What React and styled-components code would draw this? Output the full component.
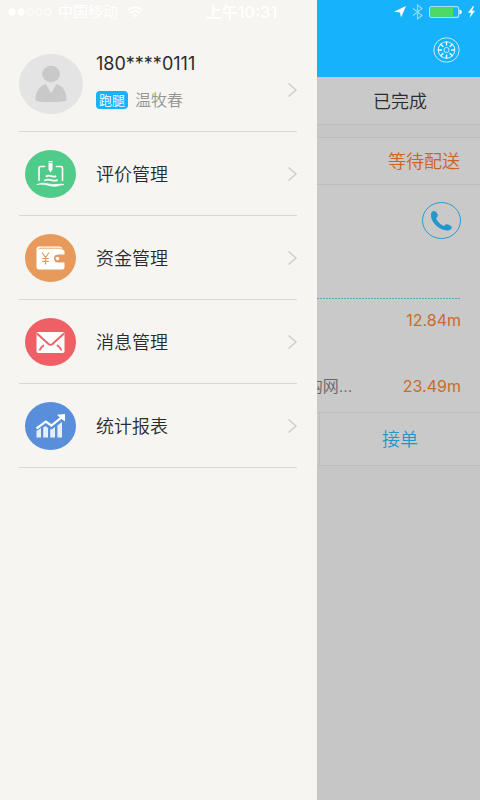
import React from 'react'
import styled, { createGlobalStyle } from 'styled-components'

const GlobalStyle = createGlobalStyle`
    * {
        box-sizing: border-box;
    }
    body {
        margin: 0;
        font-family: Inter, 'Noto Sans CJK SC', sans-serif;
        font-size: 18px;
        font-weight: 350;
        line-height: 24px;
        color: #2b2b2b;
    }
    button {
        font: inherit;
        color: inherit;
        background: none;
        border: 0;
        padding: 0;
        cursor: pointer;
    }
    svg {
        display: block;
        flex: none;
    }
`;

const Layout = styled.div`
    position: relative;
    display: flex;
    min-height: 100vh;
    background: #f6f5f1;
`;

const StatusBar = styled.header`
    position: absolute;
    top: 0;
    left: 0;
    right: 0;
    height: 24px;
    padding: 0 5px 0 8px;
    display: grid;
    grid-template-columns: 1fr auto 1fr;
    align-items: center;
    color: white;
    font-size: 15px;
    font-weight: 400;
`;

const StatusGroup = styled.div`
    display: flex;
    align-items: center;
    justify-content: ${props => props.$end ? 'flex-end' : 'flex-start'};
    gap: 6px;
`;

const Time = styled.span`
    font-size: 16px;
    font-weight: 600;
`;

const Drawer = styled.aside`
    flex: 0 0 66%;
    padding: 36px 20px 0 19px;
`;

const Profile = styled.a`
    display: flex;
    align-items: center;
    height: 96px;
    border-bottom: 1px solid #d9d8d5;
    color: inherit;
    text-decoration: none;
`;

const ProfileText = styled.div`
    flex: 1;
    margin-left: 13px;
    display: flex;
    flex-direction: column;
    gap: 12px;
    padding-bottom: 4px;
`;

const Phone = styled.span`
    font-weight: 400;
`;

const ProfileArrow = styled.span`
    padding-top: 12px;
`;

const NameLine = styled.div`
    display: flex;
    align-items: center;
    gap: 7px;
    color: #959595;
    font-size: 16px;
`;

const Badge = styled.span`
    padding: 0 3px;
    border-radius: 4px;
    background: #16b2fc;
    color: white;
    font-size: 13px;
    line-height: 18px;
`;

const MenuItem = styled.a`
    display: flex;
    align-items: center;
    height: 84px;
    padding-left: 6px;
    border-bottom: 1px solid #d9d8d5;
    color: inherit;
    text-decoration: none;
`;

const MenuLabel = styled.span`
    flex: 1;
    margin-left: 20px;
    padding-top: 2px;
`;

const Screen = styled.main`
    flex: 1;
    min-width: 0;
    background: #c6c6c6;
`;

const TopBar = styled.div`
    height: 77px;
    padding: 37px 20px 0 0;
    display: flex;
    justify-content: flex-end;
    align-items: flex-start;
    background: #16b2fc;
`;

const Tab = styled.button`
    display: block;
    width: 100%;
    height: 48px;
    padding: 2px 0 0 3px;
    background: #c9c9c9;
    border-bottom: 1px solid #bdbdbd;
`;

const Order = styled.section`
    margin-top: 12px;
    background: #c9c9c9;
    border-top: 1px solid #bdbdbd;
    border-bottom: 1px solid #bdbdbd;
`;

const OrderState = styled.div`
    height: 47px;
    padding: 2px 20px 0 0;
    display: flex;
    align-items: center;
    justify-content: flex-end;
    color: #cb6422;
    border-bottom: 1px solid #bdbdbd;
`;

const Contact = styled.div`
    height: 114px;
    margin-right: 19px;
    padding-top: 17px;
    display: flex;
    justify-content: flex-end;
    align-items: flex-start;
    background: repeating-linear-gradient(90deg, #5aa5c0 0 2px, transparent 2px 3px) bottom / 100% 1px no-repeat;
`;

const Stop = styled.div`
    height: ${props => props.$tall ? '71px' : '42px'};
    padding-right: 19px;
    padding-bottom: ${props => props.$tall ? '14px' : '0'};
    display: flex;
    align-items: ${props => props.$tall ? 'flex-end' : 'center'};
    justify-content: flex-end;
    font-size: 16px;
`;

const Clip = styled.div`
    flex: 1;
    display: flex;
    overflow: hidden;
`;

const Place = styled.span`
    flex: none;
    margin-left: -10px;
    color: #666;
    white-space: nowrap;
`;

const Distance = styled.span`
    color: #cb6a2b;
    font-weight: 400;
`;

const AcceptRow = styled.div`
    padding-left: 2px;
    border-top: 1px solid #bdbdbd;
`;

const Accept = styled.button`
    display: block;
    width: 100%;
    height: 52px;
    padding-top: 2px;
    border-left: 1px solid #bdbdbd;
    color: #2397c9;
`;

const Chevron = () => (
    <svg width="10" height="16" viewBox="0 0 10 16" fill="none" stroke="#cccbc8" strokeWidth="1.3">
        <path d="M1.500 1.500 9 8 1.500 14.500" />
    </svg>
)

const Avatar = () => (
    <svg width="64" height="60" viewBox="0 0 64 60">
        <ellipse cx="32" cy="30" rx="32" ry="30" fill="#e4e4e4" />
        <ellipse cx="32" cy="20" rx="9" ry="8.3" fill="#c9c9c9" />
        <path d="M27 30 32 39.5 37.5 30C44 32 47.5 37 47.5 46Q47.5 48 32 48 16.5 48 16.5 46C16.5 37 20.5 32 27 30Z" fill="#c9c9c9" />
    </svg>
)

const ReviewIcon = () => (
    <g fill="none" stroke="white" strokeWidth="1.6" strokeLinecap="round">
        <path d="M19.500 16.500H15.500Q14 16.500 14 18V30.500M31.500 16.500H36Q37.500 16.500 37.500 18V30.500" />
        <path d="M23.500 11H27.500V19.500L25.500 22.500 23.500 19.500Z" fill="white" stroke="none" />
        <path d="M23.500 12.700H27.500" stroke="#50cb8a" strokeWidth="0.8" />
        <path d="M21.500 26.300C24.500 24.300 27 27.500 30.500 26.300M20 30.300C24.500 28 27 32 32 30.300" strokeWidth="1.8" />
        <path d="M12 34.600C19 31.500 24 34.500 28 34.600 32 34.800 35 33.500 39 34.500 33 35.500 31 37 26.500 36 21 34.800 18 33.500 12 34.600Z" fill="white" strokeWidth="0.6" />
    </g>
)

const WalletIcon = () => (
    <g>
        <path d="M14 12.500H34.500Q37 12.500 37.500 15.500L39.500 17V20.500H33A4 4 0 0 0 33 28.500H39.500V33Q39.500 35.500 37 35.500H14Q11.500 35.500 11.500 33V15Q11.500 12.500 14 12.500Z" fill="white" />
        <path d="M13.500 15.500Q14 14.200 16 14.200H35Q36.500 14.200 36.500 15.500" fill="none" stroke="#e89a5c" strokeWidth="0.9" />
        <circle cx="32.500" cy="24.500" r="1.800" fill="white" />
        <path d="M17 18.500 20.500 23.500 24 18.500M20.500 23.500V30.500M17.200 24.500H23.800M17.200 27.300H23.800" fill="none" stroke="#e89a5c" strokeWidth="1.2" />
    </g>
)

const MailIcon = () => (
    <g>
        <rect x="11.500" y="14" width="28" height="21" rx="1.800" fill="white" />
        <path d="M12 15.500 23.500 26Q25.500 27.500 27.500 26L39 15.500" fill="none" stroke="#ee6065" strokeWidth="2" />
        <path d="M19 27Q16 29 14.500 32.500M32 27Q35 29 36.500 32.500" fill="none" stroke="#ee6065" strokeWidth="1.800" />
    </g>
)

const ChartIcon = () => (
    <g fill="white">
        <g opacity="0.85">
            <path d="M11.500 29 16 26V35.500H11.500ZM18.200 25.500 20.500 24 23 26V35.500H18.200ZM25.200 27 26.500 27.500 30 25V35.500H25.200ZM32.400 23.500 37 20V35.500H32.400Z" />
        </g>
        <path d="M11.500 26.500 20.800 19.500 26.300 23.500 36.500 15.500" fill="none" stroke="white" strokeWidth="2.200" />
        <path d="M32 12.800 40 12V19.500L37.300 17.500 34.500 15.200Z" />
    </g>
)

const Disc = ({ color, children }) => (
    <svg width="51" height="48" viewBox="0 0 51 48">
        <ellipse cx="25.500" cy="24" rx="25.500" ry="24" fill={color} />
        {children}
    </svg>
)

const WheelIcon = () => (
    <svg width="27" height="26" viewBox="0 0 27 26" fill="none" stroke="#c4edff">
        <ellipse cx="13.500" cy="13" rx="12.700" ry="12.200" strokeWidth="1" />
        <circle cx="13.500" cy="13" r="8.300" strokeWidth="1.100" />
        <circle cx="13.500" cy="13" r="2.600" strokeWidth="1" />
        {[0, 45, 90, 135, 180, 225, 270, 315].map(angle => (
            <path key={angle} d="M13.5 4.5V8.500" strokeWidth="1.400" stroke="white" transform={`rotate(${angle} 13.5 13)`} />
        ))}
    </svg>
)

const PhoneIcon = () => (
    <svg width="39" height="37" viewBox="0 0 39 37">
        <ellipse cx="19.500" cy="18.500" rx="19" ry="18" fill="none" stroke="#2d9cca" />
        <path d="M10.500 9.500C12.500 8.500 14 9.500 15.500 12 16.500 14 15.500 15 14 16.300 15.500 20 18.500 22.500 22 24 23.500 22 25 21.800 27 22.800 29.500 24 30.500 25 29.500 26.500 27.500 29 24.500 29 20.500 27.500 14 25 8.500 18.500 9 12.500 9 11 9.500 10 10.500 9.500Z" fill="#2597cb" />
    </svg>
)

const Signal = () => (
    <svg width="44" height="8" viewBox="0 0 44 8" fill="none" stroke="white">
        {[4, 13, 22, 31, 40].map((x, i) => (
            <circle key={x} cx={x} cy="4" r="3.300" fill={i < 2 ? 'white' : 'none'} />
        ))}
    </svg>
)

const Wifi = () => (
    <svg width="20" height="12" viewBox="0 0 20 12" fill="none" stroke="white" strokeWidth="2">
        <path d="M4 4Q11-1.500 18 4M6.500 7Q11 3 15.500 7" />
        <path d="M8.500 8.800Q11 7 13.500 8.800L11 11.500Z" fill="white" stroke="none" />
    </svg>
)

const Location = () => (
    <svg width="12" height="12" viewBox="0 0 12 12" fill="white">
        <path d="M12 0 7 11.500 6 6.500 0 5.800Z" />
    </svg>
)

const Bluetooth = () => (
    <svg width="11" height="16" viewBox="0 0 11 16" fill="none" stroke="#8cd8fc" strokeWidth="1.200">
        <path d="M1 4.500 10 11.500 5.500 15V1L10 4.500 1 11.500" />
    </svg>
)

const Battery = () => (
    <svg width="33" height="12" viewBox="0 0 33 12">
        <rect x="0.600" y="0.600" width="29" height="10.800" rx="2" fill="none" stroke="#a5e0fb" strokeWidth="1.200" />
        <rect x="1.200" y="1.200" width="23" height="9.600" rx="1" fill="#4cd964" />
        <path d="M30.500 3.500Q32.800 4 32.800 6T30.500 8.500Z" fill="white" />
    </svg>
)

const Bolt = () => (
    <svg width="7" height="12" viewBox="0 0 7 12" fill="white">
        <path d="M5 0 0 6.800H3L1.500 12 7 4.800H4.200L6 0Z" />
    </svg>
)

const menu = [
    { label: '评价管理', color: '#50cb8a', icon: <ReviewIcon /> },
    { label: '资金管理', color: '#e89a5c', icon: <WalletIcon /> },
    { label: '消息管理', color: '#ee6065', icon: <MailIcon /> },
    { label: '统计报表', color: '#588eda', icon: <ChartIcon /> },
]

const App = () => {
    return (
        <>
            <GlobalStyle />
            <Layout>
                <Drawer>
                    <Profile href="#profile">
                        <Avatar />
                        <ProfileText>
                            <Phone>180****0111</Phone>
                            <NameLine><Badge>跑腿</Badge>温牧春</NameLine>
                        </ProfileText>
                        <ProfileArrow><Chevron /></ProfileArrow>
                    </Profile>
                    <nav>
                        {menu.map(item => (
                            <MenuItem key={item.label} href="#menu">
                                <Disc color={item.color}>{item.icon}</Disc>
                                <MenuLabel>{item.label}</MenuLabel>
                                <Chevron />
                            </MenuItem>
                        ))}
                    </nav>
                </Drawer>
                <Screen>
                    <TopBar>
                        <button aria-label="设置"><WheelIcon /></button>
                    </TopBar>
                    <Tab>已完成</Tab>
                    <Order>
                        <OrderState>等待配送</OrderState>
                        <Contact>
                            <button aria-label="电话"><PhoneIcon /></button>
                        </Contact>
                        <Stop>
                            <Distance>12.84m</Distance>
                        </Stop>
                        <Stop $tall>
                            <Clip><Place>购网…</Place></Clip>
                            <Distance>23.49m</Distance>
                        </Stop>
                        <AcceptRow>
                            <Accept>接单</Accept>
                        </AcceptRow>
                    </Order>
                </Screen>
                <StatusBar>
                    <StatusGroup>
                        <Signal />
                        <span>中国移动</span>
                        <Wifi />
                    </StatusGroup>
                    <Time>上午10:31</Time>
                    <StatusGroup $end>
                        <Location />
                        <Bluetooth />
                        <Battery />
                        <Bolt />
                    </StatusGroup>
                </StatusBar>
            </Layout>
        </>
    )
}

export default App
